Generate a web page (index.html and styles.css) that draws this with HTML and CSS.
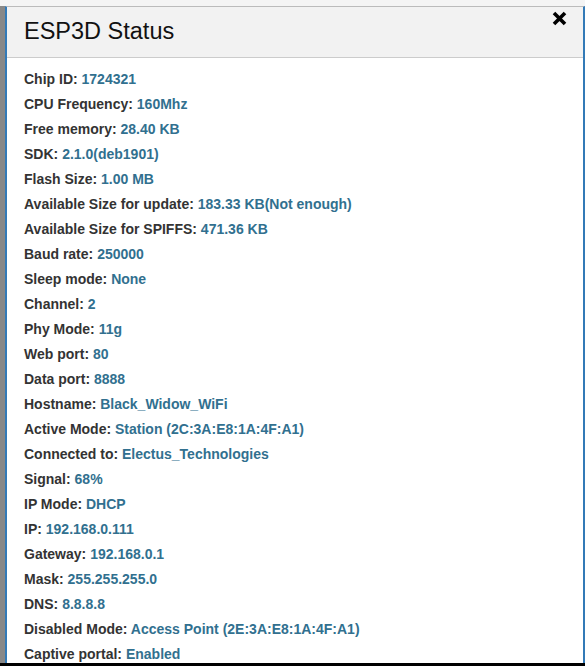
FILE: index.html
```html
<!DOCTYPE html>
<html lang="en">
<head>
    <meta charset="UTF-8">
    <meta name="viewport" content="width=device-width, initial-scale=1.0">
    <title>ESP3D Status</title>
    <link rel="stylesheet" href="styles.css">
</head>
<body>
    <div class="page-top"></div>
    <div class="backdrop">
        <div class="modal">
            <header class="modal-header">
                <h4 class="modal-title">ESP3D Status</h4>
                <button class="close" type="button" aria-label="Close">
                    <svg width="15" height="15" viewBox="0 0 15 15">
                        <path d="M2 2 L13 13 M13 2 L2 13" stroke="#000" stroke-width="3.6" fill="none"/>
                    </svg>
                </button>
            </header>
            <section class="modal-body" id="statusList">
                <!-- status rows are added here -->
            </section>
        </div>
    </div>
    <div class="page-bottom"></div>

    <script>
        const status = [
            ["Chip ID", "1724321"],
            ["CPU Frequency", "160Mhz"],
            ["Free memory", "28.40 KB"],
            ["SDK", "2.1.0(deb1901)"],
            ["Flash Size", "1.00 MB"],
            ["Available Size for update", "183.33 KB(Not enough)"],
            ["Available Size for SPIFFS", "471.36 KB"],
            ["Baud rate", "250000"],
            ["Sleep mode", "None"],
            ["Channel", "2"],
            ["Phy Mode", "11g"],
            ["Web port", "80"],
            ["Data port", "8888"],
            ["Hostname", "Black_Widow_WiFi"],
            ["Active Mode", "Station (2C:3A:E8:1A:4F:A1)"],
            ["Connected to", "Electus_Technologies"],
            ["Signal", "68%"],
            ["IP Mode", "DHCP"],
            ["IP", "192.168.0.111"],
            ["Gateway", "192.168.0.1"],
            ["Mask", "255.255.255.0"],
            ["DNS", "8.8.8.8"],
            ["Disabled Mode", "Access Point (2E:3A:E8:1A:4F:A1)"],
            ["Captive portal", "Enabled"]
        ];

        const list = document.getElementById('statusList');
        status.forEach(item => {
            const div = document.createElement('div');
            div.className = 'status-row';
            div.innerHTML = `${item[0]}: <span class="value">${item[1]}</span>`;
            list.appendChild(div);
        });
    </script>
</body>
</html>
```

FILE: styles.css
```css
* {
    box-sizing: border-box;
    margin: 0;
    padding: 0;
}

html, body {
    height: 100%;
}

body {
    font-family: "Liberation Sans", Arial, sans-serif;
    color: #333;
    background-color: #888;
    display: flex;
    flex-direction: column;
    overflow: hidden;
}

.page-top {
    height: 6px;
    background-color: #f4f4f4;
    flex-shrink: 0;
}

.page-bottom {
    height: 3px;
    background-color: #000;
    flex-shrink: 0;
}

.backdrop {
    flex: 1;
    min-height: 0;
    padding-left: 5px;
    display: flex;
    overflow: hidden;
}

.modal {
    flex: 1;
    background-color: #fff;
    border-left: 2px solid #337ab7;
    border-right: 2px solid #337ab7;
    border-top: 1px solid #bbb;
    overflow: hidden;
}

.modal-header {
    display: flex;
    justify-content: space-between;
    align-items: flex-start;
    height: 51px;
    padding: 0 16px 0 17px;
    background-color: #f2f2f2;
    border-bottom: 1px solid #ccc;
}

.modal-title {
    font-size: 23.5px;
    font-weight: normal;
    color: #111;
    line-height: 49px;
}

.close {
    display: flex;
    width: 15px;
    height: 15px;
    margin-top: 4px;
    background: none;
    border: none;
    cursor: pointer;
}

.modal-body {
    padding: 9px 17px;
}

.status-row {
    font-size: 14px;
    font-weight: bold;
    line-height: 25px;
    color: #333;
}

.status-row .value {
    color: #31708f;
}
```
